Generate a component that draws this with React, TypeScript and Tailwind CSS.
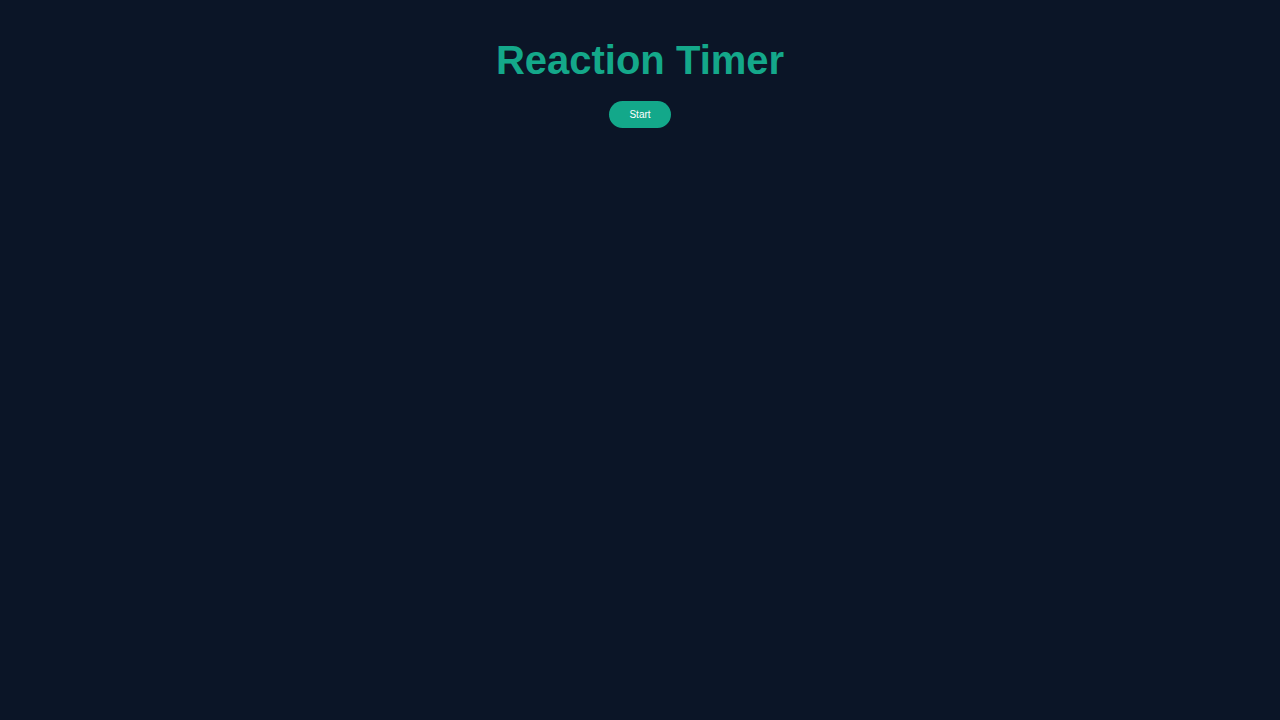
export default function App() {
  return (
    <div className="min-h-screen w-full bg-[#0b1527] flex flex-col items-center pt-[37px] font-['Liberation_Sans',Arial,sans-serif]">
      <h1 className="text-[40px] leading-[46px] font-bold text-[#14a88a]">Reaction Timer</h1>
      <button className="mt-[18px] h-[27px] px-[20px] rounded-full bg-[#13a88a] text-white text-[10px] leading-none">
        Start
      </button>
    </div>
  )
}
